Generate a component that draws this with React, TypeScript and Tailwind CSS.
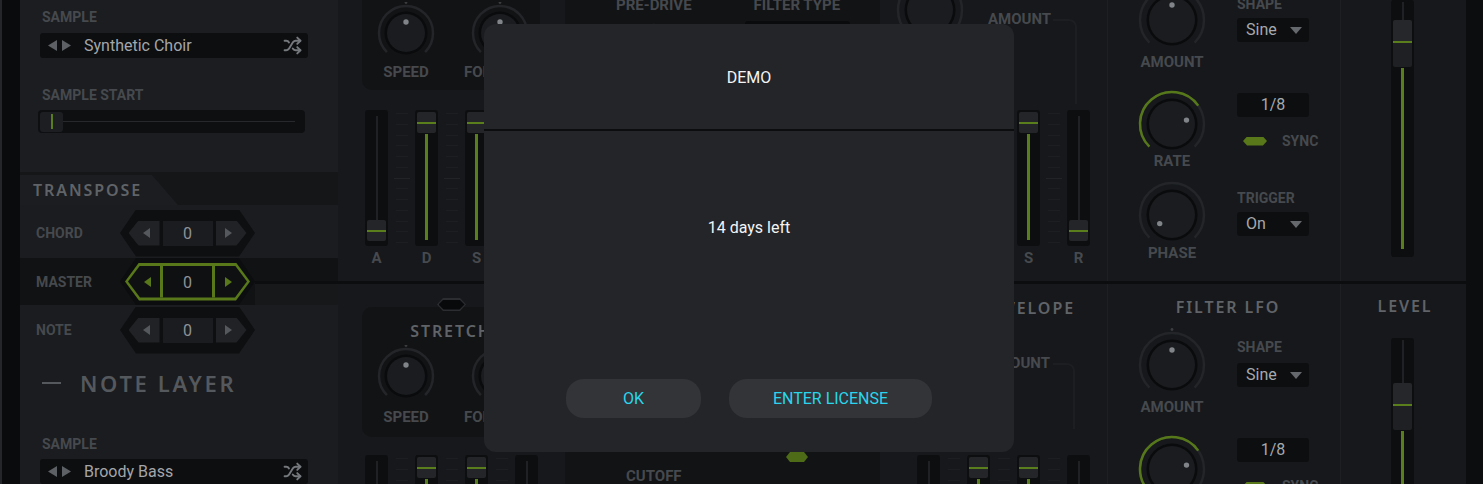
import { Fragment, type ReactNode } from "react";
import { Shuffle } from "lucide-react";

type KnobProps = { size: number; ring: number; body: number; angle: number; arc?: number; tick?: boolean };

const Knob = ({ size, ring, body, angle, arc, tick }: KnobProps) => {
  const c = size / 2;
  const pt = (r: number, a: number) => {
    const t = (a * Math.PI) / 180;
    return [c + r * Math.sin(t), c - r * Math.cos(t)];
  };
  const path = (r: number, a0: number, a1: number) => {
    const [x0, y0] = pt(r, a0);
    const [x1, y1] = pt(r, a1);
    return `M${x0} ${y0}A${r} ${r} 0 ${a1 - a0 > 180 ? 1 : 0} 1 ${x1} ${y1}`;
  };
  const [dx, dy] = pt(body - 8, angle);
  const [tx, ty] = pt(ring + 3.5, 0);
  return (
    <svg width={size} height={size} viewBox={`0 0 ${size} ${size}`} className="block shrink-0">
      <path d={path(ring, -135, 135)} fill="none" stroke="#232528" strokeWidth="2.5" />
      {arc !== undefined && <path d={path(ring, -135, arc)} fill="none" stroke="#56781a" strokeWidth="2.5" />}
      {tick && <circle cx={tx} cy={ty} r="1.4" fill="#3b3d41" />}
      <circle cx={c} cy={c} r={body + 2.5} fill="#0a0b0c" />
      <circle cx={c} cy={c} r={body} fill="#1a1c1f" />
      <circle cx={dx} cy={dy} r="2.7" fill="#818488" />
    </svg>
  );
};

const Label = ({ children, className = "" }: { children: ReactNode; className?: string }) => (
  <div className={"shrink-0 font-['Roboto'] text-[14px] font-bold leading-none whitespace-nowrap text-[#46494d] " + className}>{children}</div>
);

const Heading = ({ children, className = "" }: { children: ReactNode; className?: string }) => (
  <div className={"shrink-0 font-['Noto_Sans'] text-[16px] font-semibold leading-none tracking-[0.12em] whitespace-nowrap text-[#606367] " + className}>{children}</div>
);

const Tri = ({ left, color = "#55585c", w = 7, h = 10 }: { left?: boolean; color?: string; w?: number; h?: number }) => (
  <svg width={w} height={h} viewBox={`0 0 ${w} ${h}`} className="block">
    <path d={left ? `M${w} 0L0 ${h / 2}L${w} ${h}Z` : `M0 0L${w} ${h / 2}L0 ${h}Z`} fill={color} />
  </svg>
);

const Handle = () => (
  <div className="w-[19px] h-[21px] shrink-0 rounded-[2px] bg-[#232528] flex flex-col justify-center">
    <div className="h-[2px] bg-[#5b7e1d]" />
  </div>
);

const Fader = ({ up }: { up: boolean }) => (
  <div className="w-[23px] h-[136px] shrink-0 rounded-[3px] bg-[#0d0e10] flex flex-col items-center p-[2px]">
    {up ? (
      <>
        <Handle />
        <div className="w-[3px] flex-1 mt-[1px] mb-[4px] bg-[#5b7e1d]" />
      </>
    ) : (
      <>
        <div className="w-[2px] flex-1 mt-[4px] bg-[#1f2124]" />
        <Handle />
        <div className="h-[3px] shrink-0" />
      </>
    )}
  </div>
);

const Ticks = () => (
  <div className="w-[27px] h-[136px] shrink-0 flex flex-col justify-between items-center py-[3px]">
    {Array.from({ length: 13 }).map((_, i) => (
      <div key={i} className={i === 6 ? "h-px w-[16px] bg-[#212327]" : "h-px w-[12px] bg-[#1c1e21]"} />
    ))}
  </div>
);

const FaderGroup = ({ labels }: { labels: string[] }) => (
  <div className="ml-[27px] flex items-start shrink-0">
    {labels.map((l, i) => (
      <Fragment key={i}>
        {i > 0 && <Ticks />}
        <div className="flex flex-col items-center shrink-0">
          <Fader up={i === 1 || i === 2} />
          <Label className="mt-[5px] text-[15px]">{l}</Label>
        </div>
      </Fragment>
    ))}
  </div>
);

const Stepper = ({ active }: { active?: boolean }) =>
  active ? (
    <div className="w-[135px] h-[47px] shrink-0 bg-[#0c0d0e] [clip-path:polygon(16px_0,calc(100%_-_16px)_0,100%_50%,calc(100%_-_16px)_100%,16px_100%,0_50%)] flex items-center justify-center">
      <div className="w-[125px] h-[38px] p-[3px] bg-[#58781a] [clip-path:polygon(14px_0,calc(100%_-_14px)_0,100%_50%,calc(100%_-_14px)_100%,14px_100%,0_50%)]">
        <div className="h-full flex bg-[#0f1012] [clip-path:polygon(12px_0,calc(100%_-_12px)_0,100%_50%,calc(100%_-_12px)_100%,12px_100%,0_50%)]">
          <div className="w-[32px] flex items-center justify-center pl-[6px]"><Tri left color="#58781a" /></div>
          <div className="w-[3px] bg-[#58781a]" />
          <div className="flex-1 flex items-center justify-center pt-[2px] font-['Roboto'] text-[16px] text-[#8f9296]">0</div>
          <div className="w-[3px] bg-[#58781a]" />
          <div className="w-[32px] flex items-center justify-center pr-[6px]"><Tri color="#58781a" /></div>
        </div>
      </div>
    </div>
  ) : (
    <div className="w-[135px] h-[47px] shrink-0 bg-[#0e0f11] [clip-path:polygon(16px_0,calc(100%_-_16px)_0,100%_50%,calc(100%_-_16px)_100%,16px_100%,0_50%)] flex items-center justify-center gap-[3px]">
      <div className="w-[31px] h-[25px] bg-[#202225] [clip-path:polygon(10px_0,100%_0,100%_100%,10px_100%,0_50%)] flex items-center justify-center pl-[5px]"><Tri left /></div>
      <div className="w-[50px] h-[25px] bg-[#1a1c1f] flex items-center justify-center pt-[2px] font-['Roboto'] text-[16px] text-[#8f9296]">0</div>
      <div className="w-[31px] h-[25px] bg-[#202225] [clip-path:polygon(0_0,calc(100%_-_10px)_0,100%_50%,calc(100%_-_10px)_100%,0_100%)] flex items-center justify-center pr-[5px]"><Tri /></div>
    </div>
  );

const Dropdown = ({ text }: { text: string }) => (
  <div className="w-[72px] h-[24px] shrink-0 rounded-[3px] bg-[#0d0e10] flex items-center justify-between pl-[9px] pr-[7px]">
    <span className="font-['Roboto'] text-[16px] leading-none text-[#a6a9ad]">{text}</span>
    <svg width="12" height="7" viewBox="0 0 12 7" className="block"><path d="M0 0H12L6 7Z" fill="#65686c" /></svg>
  </div>
);

const ValueBox = ({ text }: { text: string }) => (
  <div className="w-[72px] h-[24px] shrink-0 rounded-[3px] bg-[#0d0e10] flex items-center justify-center font-['Roboto'] text-[16px] leading-none text-[#a6a9ad]">
    {text}
  </div>
);

const SampleBox = ({ name }: { name: string }) => (
  <div className="w-[268px] h-[25px] shrink-0 rounded-[3px] bg-[#0d0e10] flex items-center pl-[8px] pr-[6px]">
    <div className="flex items-center gap-[5px]">
      <Tri left color="#5d6064" w={9} h={11} />
      <Tri color="#5d6064" w={9} h={11} />
    </div>
    <span className="ml-[13px] font-['Roboto'] text-[16px] leading-none text-[#a3a6aa]">{name}</span>
    <Shuffle size={19} strokeWidth={2.4} className="ml-auto text-[#75787c]" />
  </div>
);

const SyncRow = () => (
  <div className="flex items-center h-[14px] ml-[6px] shrink-0">
    <div className="w-[24px] h-[9px] bg-[#58781a] [clip-path:polygon(4px_0,calc(100%_-_4px)_0,100%_50%,calc(100%_-_4px)_100%,4px_100%,0_50%)]" />
    <Label className="ml-[15px]">SYNC</Label>
  </div>
);

const LevelFader = ({ top }: { top: boolean }) => (
  <div className={"w-[23px] shrink-0 rounded-[3px] bg-[#0d0e10] flex flex-col items-center p-[2px] " + (top ? "h-[257px]" : "h-[220px]")}>
    <div className={"w-[2px] shrink-0 bg-[#1f2124] " + (top ? "h-[18px]" : "h-[43px]")} />
    <div className="w-[19px] h-[47px] shrink-0 rounded-[2px] flex flex-col overflow-hidden">
      <div className="h-[21px] bg-[#25272a]" />
      <div className="h-[2px] bg-[#5b7e1d]" />
      <div className="flex-1 bg-[#1e2023]" />
    </div>
    <div className="w-[3px] flex-1 mt-[1px] mb-[6px] bg-[#5b7e1d]" />
  </div>
);

const App = () => {
  return (
    <div className="relative w-[1483px] h-[484px] overflow-hidden flex bg-[#16181b] font-['Roboto']">
      {/* left edge */}
      <div className="w-[20px] shrink-0 flex">
        <div className="w-[2px] bg-[#24262a]" />
        <div className="flex-1 bg-[#0a0b0c]" />
      </div>

      {/* sample / transpose panel */}
      <div className="w-[318px] shrink-0 flex flex-col bg-[#1a1c1f]">
        <div className="h-[172px] shrink-0 bg-[#1b1d20] pl-[20px] pt-[10px] flex flex-col">
          <Label className="ml-[2px]">SAMPLE</Label>
          <div className="mt-[9px] shrink-0"><SampleBox name="Synthetic Choir" /></div>
          <Label className="mt-[30px] ml-[2px]">SAMPLE START</Label>
          <div className="mt-[8px] -ml-[2px] w-[267px] h-[23px] shrink-0 rounded-[4px] bg-[#0e0f11] flex items-center px-[2px]">
            <div className="w-[23px] h-[20px] rounded-[3px] bg-[#1c1e21] flex justify-center items-center">
              <div className="w-[2px] h-[15px] bg-[#5b7e1d]" />
            </div>
            <div className="flex-1 h-px mr-[8px] bg-[#26282b]" />
          </div>
        </div>

        <div className="h-[33px] shrink-0 flex bg-[#141618]">
          <div className="w-[158px] mt-[3px] bg-[#1b1d20] [clip-path:polygon(0_0,132px_0,100%_100%,0_100%)] pl-[13px] flex items-center">
            <Heading className="text-[#5f6266]">TRANSPOSE</Heading>
          </div>
        </div>

        <div className="h-[53px] shrink-0 flex items-center pt-[3px]">
          <Label className="w-[100px] pl-[16px]">CHORD</Label>
          <Stepper />
        </div>
        <div className="h-[47px] shrink-0 flex items-center bg-[#111214]">
          <Label className="w-[100px] pl-[16px]">MASTER</Label>
          <Stepper active />
          <div className="flex-1 self-stretch flex flex-col">
            <div className="h-[23px]" />
            <div className="h-[3px] bg-[#0c0d0e]" />
            <div className="flex-1 bg-[#16181a]" />
          </div>
        </div>
        <div className="h-[50px] shrink-0 flex items-center">
          <Label className="w-[100px] pl-[16px]">NOTE</Label>
          <Stepper />
        </div>

        <div className="mt-[17px] flex items-center pl-[22px] h-[22px] shrink-0">
          <div className="w-[19px] h-[2px] bg-[#55585c]" />
          <div className="ml-[19px] font-['Noto_Sans'] text-[22px] font-semibold leading-none tracking-[0.12em] text-[#55585c]">NOTE LAYER</div>
        </div>
        <Label className="mt-[43px] ml-[22px]">SAMPLE</Label>
        <div className="mt-[8px] ml-[20px] shrink-0"><SampleBox name="Broody Bass" /></div>
      </div>

      {/* main area */}
      <div className="w-[1128px] shrink-0 flex flex-col">
        {/* top layer */}
        <div className="h-[281px] shrink-0 flex overflow-hidden">
          <div className="w-[217px] shrink-0 flex flex-col">
            <div className="ml-[24px] w-[178px] h-[90px] shrink-0 rounded-b-[10px] bg-[#121315] flex gap-[27px] pl-[13px] pt-[2px]">
              <div className="flex flex-col items-center">
                <Knob size={62} ring={27} body={19} angle={0} tick />
                <Label className="mt-[1px] text-[15px]">SPEED</Label>
              </div>
              <div className="flex flex-col items-center">
                <Knob size={62} ring={27} body={19} angle={0} tick />
                <Label className="mt-[1px] text-[15px]">FORMANT</Label>
              </div>
            </div>
            <div className="mt-[20px] shrink-0"><FaderGroup labels={["A", "D", "S", "R"]} /></div>
          </div>

          <div className="w-[335px] shrink-0 flex">
            <div className="ml-[10px] w-[315px] bg-[#121315] flex flex-col">
              <div className="flex -mt-[2px] shrink-0">
                <Label className="ml-[51px] text-[15px]">PRE-DRIVE</Label>
                <Label className="ml-[62px] text-[15px]">FILTER TYPE</Label>
              </div>
              <div className="flex items-start mt-[8px] shrink-0">
                <div className="ml-[58px]"><Knob size={62} ring={27} body={19} angle={0} /></div>
                <div className="ml-[60px] w-[105px] h-[24px] rounded-[3px] bg-[#0a0b0c]" />
              </div>
            </div>
          </div>

          <div className="w-[217px] shrink-0 flex flex-col">
            <div className="h-[110px] shrink-0 flex items-start">
              <div className="ml-[3px] -mt-[27px]"><Knob size={74} ring={32} body={23} angle={0} /></div>
              <Label className="ml-[21px] mt-[12px] text-[15px]">AMOUNT</Label>
              <div className="ml-[2px] mt-[19px] w-[24px] h-[85px] rounded-tr-[8px] border-t-2 border-r-2 border-[#1c1e21]" />
            </div>
            <FaderGroup labels={["A", "D", "S", "R"]} />
          </div>

          <div className="w-[233px] shrink-0 flex border-l border-[#1d1f22]">
            <div className="ml-[27px] w-[74px] flex flex-col items-center">
              <div className="-mt-[17px]"><Knob size={74} ring={32} body={23} angle={0} /></div>
              <Label className="-mt-[2px] text-[15px]">AMOUNT</Label>
              <div className="mt-[17px]"><Knob size={74} ring={32} body={23} angle={75} arc={55} /></div>
              <Label className="-mt-[7px] text-[15px]">RATE</Label>
              <div className="mt-[9px]"><Knob size={74} ring={32} body={23} angle={-125} /></div>
              <Label className="-mt-[6px] text-[15px]">PHASE</Label>
            </div>
            <div className="ml-[28px] flex flex-col">
              <Label className="-mt-[3px]">SHAPE</Label>
              <div className="mt-[7px]"><Dropdown text="Sine" /></div>
              <div className="mt-[51px]"><ValueBox text="1/8" /></div>
              <div className="mt-[17px]"><SyncRow /></div>
              <Label className="mt-[43px]">TRIGGER</Label>
              <div className="mt-[7px]"><Dropdown text="On" /></div>
            </div>
          </div>

          <div className="w-[125px] shrink-0 border-l border-[#1d1f22]">
            <div className="ml-[50px]"><LevelFader top /></div>
          </div>
        </div>

        <div className="h-[3px] shrink-0 bg-[#0c0d0e]" />

        {/* bottom layer */}
        <div className="flex-1 flex overflow-hidden">
          <div className="w-[217px] shrink-0 flex flex-col">
            <div className="relative z-10 shrink-0 ml-[99px] mt-[14px] w-[29px] h-[13px] p-[1.5px] bg-[#2b2d30] [clip-path:polygon(6px_0,calc(100%_-_6px)_0,100%_50%,calc(100%_-_6px)_100%,6px_100%,0_50%)]">
              <div className="h-full bg-[#08090a] [clip-path:polygon(5px_0,calc(100%_-_5px)_0,100%_50%,calc(100%_-_5px)_100%,5px_100%,0_50%)]" />
            </div>
            <div className="-mt-[4px] ml-[24px] w-[178px] h-[130px] shrink-0 rounded-[10px] bg-[#121315] flex flex-col">
              <Heading className="mt-[16px] self-center">STRETCH</Heading>
              <div className="flex gap-[27px] pl-[13px] mt-[6px] shrink-0">
                <div className="flex flex-col items-center">
                  <Knob size={62} ring={27} body={19} angle={0} tick />
                  <Label className="mt-[3px] text-[15px]">SPEED</Label>
                </div>
                <div className="flex flex-col items-center">
                  <Knob size={62} ring={27} body={19} angle={0} tick />
                  <Label className="mt-[3px] text-[15px]">FORMANT</Label>
                </div>
              </div>
            </div>
            <div className="mt-[18px] shrink-0"><FaderGroup labels={["A", "D", "S", "R"]} /></div>
          </div>

          <div className="w-[335px] shrink-0 flex">
            <div className="ml-[10px] w-[315px] bg-[#121315] flex flex-col">
              <div className="shrink-0 mt-[168px] ml-[221px] w-[22px] h-[10px] bg-[#4e6b17] [clip-path:polygon(4px_0,calc(100%_-_4px)_0,100%_50%,calc(100%_-_4px)_100%,4px_100%,0_50%)]" />
              <Label className="mt-[7px] ml-[61px] text-[15px]">CUTOFF</Label>
            </div>
          </div>

          <div className="w-[217px] shrink-0 flex flex-col">
            <div className="mt-[16px] flex justify-end pr-[32px] shrink-0">
              <Heading>ENVELOPE</Heading>
            </div>
            <div className="mt-[40px] h-[73px] shrink-0 flex justify-end items-start pr-[32px]">
              <Label className="text-[15px]">AMOUNT</Label>
              <div className="ml-[3px] mt-[7px] w-[22px] h-[66px] rounded-tr-[8px] border-t-2 border-r-2 border-[#1c1e21]" />
            </div>
            <div className="mt-[26px] shrink-0"><FaderGroup labels={["A", "D", "S", "R"]} /></div>
          </div>

          <div className="w-[233px] shrink-0 flex flex-col border-l border-[#1d1f22]">
            <Heading className="mt-[15px] self-center pl-[8px]">FILTER LFO</Heading>
            <div className="flex shrink-0">
              <div className="ml-[27px] w-[74px] flex flex-col items-center">
                <div className="mt-[13px]"><Knob size={74} ring={32} body={23} angle={0} tick /></div>
                <Label className="-mt-[2px] text-[15px]">AMOUNT</Label>
                <div className="mt-[17px]"><Knob size={74} ring={32} body={23} angle={75} arc={55} /></div>
              </div>
              <div className="ml-[28px] flex flex-col">
                <Label className="mt-[25px]">SHAPE</Label>
                <div className="mt-[9px]"><Dropdown text="Sine" /></div>
                <div className="mt-[51px]"><ValueBox text="1/8" /></div>
                <div className="mt-[17px]"><SyncRow /></div>
              </div>
            </div>
          </div>

          <div className="w-[125px] shrink-0 flex flex-col border-l border-[#1d1f22]">
            <Heading className="mt-[14px] self-center pl-[4px]">LEVEL</Heading>
            <div className="ml-[50px] mt-[24px] shrink-0"><LevelFader top={false} /></div>
          </div>
        </div>
      </div>

      {/* right edge */}
      <div className="flex-1 bg-[#0c0d0e]" />

      {/* demo dialog */}
      <div className="absolute left-[484px] top-[24px] w-[530px] h-[428px] rounded-[12px] bg-[#232529] overflow-hidden flex flex-col font-['Roboto']">
        <div className="h-[105px] shrink-0 flex items-center justify-center pt-[3px] text-[16px] font-normal text-[#f4f4f4]">DEMO</div>
        <div className="h-[2px] shrink-0 bg-[#0c0d0e]" />
        <div className="flex-1 flex flex-col items-center">
          <div className="mt-[87px] h-[20px] flex items-center text-[16px] font-normal text-[#f4f4f4]">14 days left</div>
          <div className="mt-[141px] flex gap-[28px]">
            <button className="w-[135px] h-[39px] rounded-[18px] bg-[#323438] text-[16px] font-normal text-[#2ad6ec]">OK</button>
            <button className="w-[203px] h-[39px] rounded-[18px] bg-[#323438] text-[16px] font-normal text-[#2ad6ec]">ENTER LICENSE</button>
          </div>
        </div>
      </div>
    </div>
  );
};

export default App;
